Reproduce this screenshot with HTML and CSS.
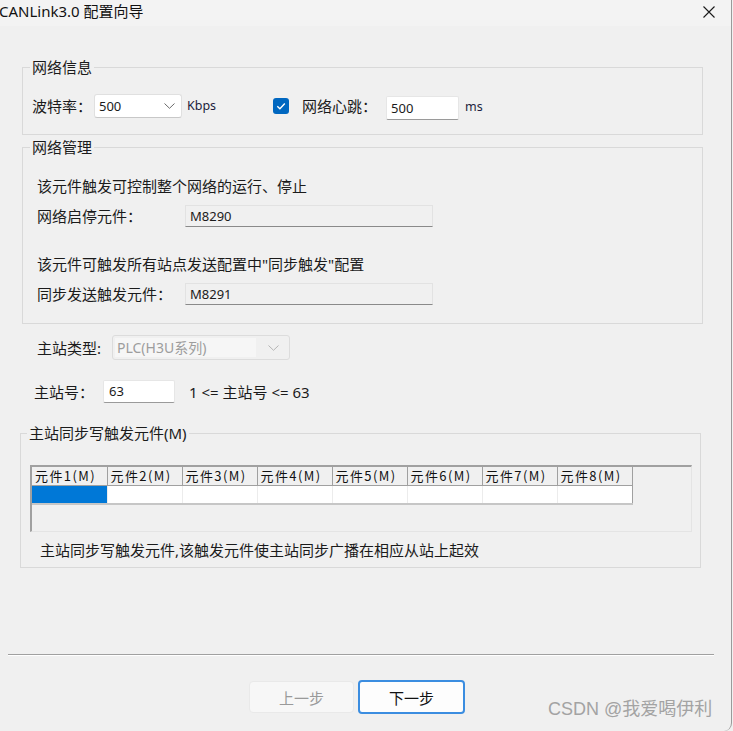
FILE: index.html
```html
<!DOCTYPE html>
<html lang="zh-CN">
<head>
<meta charset="utf-8">
<title>CANLink3.0 配置向导</title>
<link rel="stylesheet" href="styles.css">
</head>
<body>
<div class="window">
  <div class="titlebar">
    <span class="title">CANLink3.0 配置向导</span>
    <svg class="close" width="12" height="12" viewBox="0 0 12 12"><path d="M0.5 0.5 L11.5 11.5 M11.5 0.5 L0.5 11.5" stroke="#1a1a1a" stroke-width="1.1" fill="none"/></svg>
  </div>

  <div class="content">
    <fieldset class="group g1">
      <legend>网络信息</legend>
      <div class="row net">
        <span class="label lbl-baud">波特率：</span>
        <div class="combo baud">
          <span class="val">500</span>
          <svg class="chev" width="11" height="6" viewBox="0 0 11 6"><path d="M0.5 0.5 L5.5 5.3 L10.5 0.5" stroke="#6a6a6a" stroke-width="1" fill="none"/></svg>
        </div>
        <span class="unit kbps">Kbps</span>
        <span class="checkbox"><svg width="16" height="16" viewBox="0 0 16 16"><path d="M4.3 8.3 L6.9 10.8 L11.8 5.6" stroke="#ffffff" stroke-width="1.4" fill="none"/></svg></span>
        <span class="label lbl-hb">网络心跳：</span>
        <div class="input hb">500</div>
        <span class="unit ms">ms</span>
      </div>
    </fieldset>

    <fieldset class="group g2">
      <legend>网络管理</legend>
      <div class="desc d1">该元件触发可控制整个网络的运行、停止</div>
      <div class="row frow">
        <span class="label lbl-field">网络启停元件：</span>
        <div class="field">M8290</div>
      </div>
      <div class="desc d2">该元件可触发所有站点发送配置中"同步触发"配置</div>
      <div class="row frow">
        <span class="label lbl-field">同步发送触发元件：</span>
        <div class="field">M8291</div>
      </div>
    </fieldset>

    <div class="row master-type">
      <span class="label lbl-type">主站类型:</span>
      <div class="combo disabled">
        <span class="dval">PLC(H3U系列)</span>
        <svg class="chev" width="11" height="6" viewBox="0 0 11 6"><path d="M0.5 0.5 L5.5 5.3 L10.5 0.5" stroke="#b5b5b5" stroke-width="1" fill="none"/></svg>
      </div>
    </div>

    <div class="row master-no">
      <span class="label lbl-no">主站号：</span>
      <div class="input no">63</div>
      <span class="range">1 &lt;= 主站号 &lt;= 63</span>
    </div>

    <fieldset class="group g3">
      <legend>主站同步写触发元件(M)</legend>
      <div class="grid">
        <table>
          <thead>
            <tr><th>元件1(M)</th><th>元件2(M)</th><th>元件3(M)</th><th>元件4(M)</th><th>元件5(M)</th><th>元件6(M)</th><th>元件7(M)</th><th>元件8(M)</th></tr>
          </thead>
          <tbody>
            <tr><td class="sel"></td><td></td><td></td><td></td><td></td><td></td><td></td><td></td></tr>
          </tbody>
        </table>
      </div>
      <div class="note">主站同步写触发元件,该触发元件使主站同步广播在相应从站上起效</div>
    </fieldset>
  </div>

  <div class="separator"></div>

  <div class="buttons">
    <button class="btn prev" disabled>上一步</button>
    <button class="btn next">下一步</button>
  </div>

  <div class="watermark">CSDN @我爱喝伊利</div>
</div>
</body>
</html>
```

FILE: styles.css
```css
* { box-sizing: border-box; }

html, body {
  margin: 0;
  padding: 0;
  background: #f0f0f0;
}

body {
  font-family: "Noto Sans", "Noto Sans CJK SC", sans-serif;
  color: #1b1b1b;
}

.window {
  position: relative;
  width: 732px;
  height: 731px;
  background: #f0f0f0;
  border-right: 1px solid #9a9a9a;
  border-bottom-right-radius: 8px;
  overflow: hidden;
}

.titlebar {
  height: 26px;
  background: #f3f3f3;
  display: flex;
  align-items: flex-start;
  justify-content: space-between;
}

.title {
  font-family: "Noto Sans", "Noto Sans CJK SC", sans-serif;
  font-size: 15px;
  line-height: 22px;
  color: #111;
  margin-left: -1px;
}

.close {
  margin-top: 6px;
  margin-right: 16px;
}

.content {
  padding-left: 22px;
  padding-top: 32px;
}

.group {
  margin: 0;
  border: 1px solid #d9d9d9;
  min-width: 0;
  width: 681px;
}

.group legend {
  font-size: 15px;
  line-height: 18px;
  padding: 0 2px;
  color: #1b1b1b;
}

.row {
  display: flex;
  align-items: center;
}

.label {
  font-size: 15px;
  line-height: 20px;
  white-space: nowrap;
}

/* group 1 */
.g1 {
  padding: 18px 0 16px 9px;
}

.g1 legend { margin-left: -2px; }

.net {
  height: 24px;
}

.lbl-baud { width: 62px; }

.combo {
  display: flex;
  align-items: center;
  justify-content: space-between;
  height: 24px;
  background: #ffffff;
  border: 1px solid #e0e0e0;
  border-bottom-color: #c8c8c8;
  border-radius: 3px;
  font-size: 13px;
}

.combo.baud {
  width: 88px;
  padding: 0 6px 0 4px;
}

.val {
  line-height: 20px;
  color: #1b1b1b;
}

.unit {
  font-size: 12.5px;
  color: #1c1c3c;
  line-height: 18px;
}

.kbps { margin-left: 5px; }

.checkbox {
  width: 16px;
  height: 16px;
  margin-left: 57px;
  background: #0067c0;
  border-radius: 3px;
  display: flex;
}

.lbl-hb {
  margin-left: 13px;
  width: 84px;
}

.input {
  height: 24px;
  background: #ffffff;
  border: 1px solid #e6e6e6;
  border-bottom-color: #9a9a9a;
  border-radius: 2px;
  font-size: 13px;
  line-height: 22px;
  padding-left: 4px;
  color: #1b1b1b;
}

.input.hb {
  width: 73px;
  margin-top: 3px;
}

.ms { margin-left: 6px; margin-top: 2px; }

/* group 2 */
.g2 {
  margin-top: 3px;
  padding: 19px 0 18px 14px;
}

.g2 legend { margin-left: -7px; }

.desc {
  font-size: 15px;
  line-height: 22px;
  height: 22px;
}

.d2 { margin-top: 26px; }

.frow {
  margin-top: 8px;
  height: 22px;
}

.lbl-field { width: 148px; }

.field {
  width: 248px;
  height: 22px;
  background: #f0f0f0;
  border: 1px solid #e2e2e2;
  border-bottom-color: #8a8a8a;
  font-size: 13px;
  line-height: 20px;
  padding-left: 4px;
  color: #1b1b1b;
}

/* master rows */
.master-type {
  margin-top: 11px;
  padding-left: 15px;
  height: 25px;
}

.lbl-type { width: 75px; }

.combo.disabled {
  width: 178px;
  height: 25px;
  background: #f0f0f0;
  border: 1px solid #dcdcdc;
  padding: 2px 10px 2px 2px;
  border-radius: 3px;
}

.dval {
  flex: 1;
  height: 100%;
  margin-right: 12px;
  background: #f6f6f6;
  color: #9d9d9d;
  font-size: 14px;
  line-height: 19px;
  padding-left: 2px;
}

.master-no {
  margin-top: 20px;
  padding-left: 12px;
  height: 23px;
}

.lbl-no { width: 69px; }

.input.no {
  width: 72px;
  height: 23px;
  line-height: 21px;
  padding-left: 5px;
}

.range {
  margin-left: 14px;
  font-size: 15px;
  line-height: 20px;
}

/* group 3 */
.g3 {
  margin-top: 21px;
  margin-left: -2px;
  padding: 23px 0 7px 9px;
}

.g3 legend { margin-left: -3px; }

.grid {
  width: 662px;
  height: 67px;
  background: #f0f0f0;
  border-top: 2px solid #a0a0a0;
  border-left: 2px solid #a0a0a0;
  border-right: 1px solid #e4e4e4;
  border-bottom: 1px solid #e4e4e4;
}

.grid table {
  border-collapse: collapse;
  table-layout: fixed;
  width: 600px;
}

.grid th {
  width: 75px;
  height: 18px;
  padding: 0 0 0 3px;
  text-align: left;
  font-weight: normal;
  font-family: "Noto Sans CJK SC", sans-serif;
  font-size: 13px;
  letter-spacing: 1.4px;
  line-height: 16px;
  background: #f0f0f0;
  color: #111;
  border-right: 1px solid #a0a0a0;
  border-bottom: 1px solid #a0a0a0;
  white-space: nowrap;
  overflow: hidden;
}

.grid td {
  height: 19px;
  padding: 0;
  background: #ffffff;
  border-right: 1px solid #ececec;
  border-bottom: 2px solid #c6c6c6;
}

.grid td:last-child,
.grid th:last-child {
  border-right-color: #a0a0a0;
}

.grid td.sel {
  background: #0078d7;
}

.note {
  margin-top: 8px;
  margin-left: 10px;
  font-size: 15px;
  line-height: 20px;
  height: 20px;
}

/* bottom */
.separator {
  margin: 86px 17px 0 8px;
  height: 2px;
  border-top: 1px solid #a0a0a0;
  border-bottom: 1px solid #ffffff;
}

.buttons {
  display: flex;
  align-items: center;
  gap: 4px;
  margin-top: 24px;
  padding-left: 249px;
  height: 34px;
}

.btn {
  font-family: "Noto Sans CJK SC", sans-serif;
  font-size: 15px;
  border-radius: 4px;
  padding: 0;
  cursor: default;
}

.prev {
  width: 105px;
  height: 32px;
  background: #f7f7f7;
  border: 1px solid #e9e9e9;
  color: #9a9a9a;
}

.next {
  width: 107px;
  height: 34px;
  background: #fdfdfd;
  border: 2px solid #3b8de0;
  color: #111;
}

.watermark {
  position: absolute;
  left: 548px;
  top: 697px;
  font-family: "Liberation Sans", "Noto Sans CJK SC", sans-serif;
  font-size: 18px;
  line-height: 24px;
  color: #a3a3a3;
  white-space: nowrap;
}
```
